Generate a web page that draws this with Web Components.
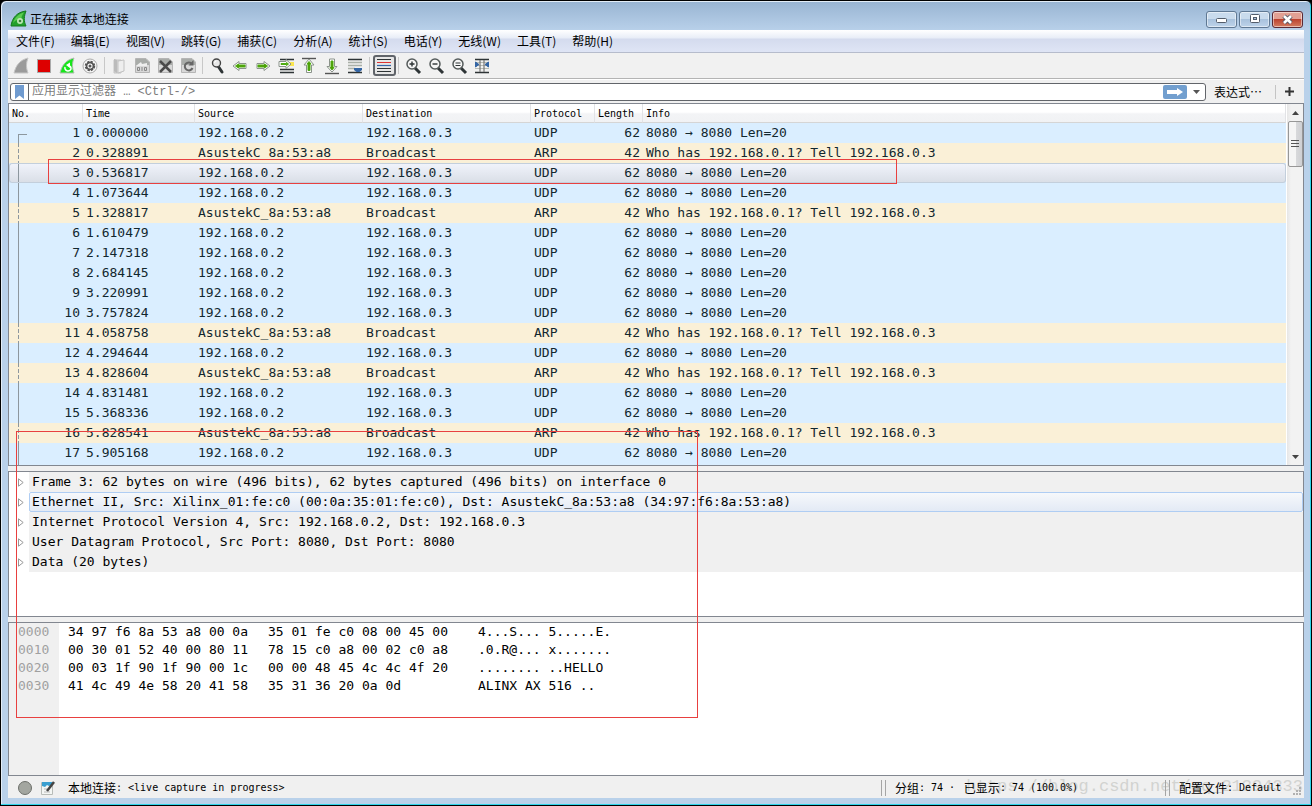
<!DOCTYPE html>
<html lang="zh-CN">
<head>
<meta charset="utf-8">
<title>正在捕获 本地连接</title>
<style>
  html, body { margin: 0; height: 100%; background: #000; }
  body {
    --ui: "Noto Sans CJK SC", sans-serif;
    --mono: "DejaVu Sans Mono", monospace;
    --line: #828790;
    --face: #f0f0f0;
    position: relative;
    overflow: hidden;
    font: 12px/16px var(--ui);
    color: #000;
  }
</style>
</head>
<body>
<app-window>
  <title-bar slot="title">正在捕获 本地连接</title-bar>
  <menu-bar></menu-bar>
  <tool-bar></tool-bar>
  <filter-bar></filter-bar>
  <pane-stack>
    <packet-list></packet-list>
    <packet-details></packet-details>
    <packet-bytes></packet-bytes>
  </pane-stack>
  <status-bar></status-bar>
</app-window>
<region-mark style="left:48px;top:159px;width:849px;height:25px"></region-mark>
<region-mark style="left:16px;top:431px;width:682px;height:287px"></region-mark>

<script>
const define = (name, html, setup) => {
  const t = document.createElement('template');
  t.innerHTML = '<style>:host,*,*::before{box-sizing:border-box}button{font:inherit;color:inherit;border:0;background:none;padding:0;margin:0}</style>' + html;
  customElements.define(name, class extends HTMLElement {
    constructor() {
      super();
      this.attachShadow({ mode: 'open' }).append(t.content.cloneNode(true));
      if (setup) setup(this.shadowRoot, this);
    }
  });
};

define('app-window', `
<style>
:host { display:flex; flex-direction:column; height:100vh; padding:0 7px 7px;
  border:1px solid #000; border-radius:6px 6px 0 0; box-shadow:inset -1px -1px #2fd5ea, inset 1px 1px #e3edf7;
  background:linear-gradient(#98b4d2, #b9d1ea 30px) }
.client { flex:1; min-height:0; display:flex; flex-direction:column; background:var(--face) }
</style>
<slot name="title"></slot><div class="client"><slot></slot></div>`);

define('title-bar', `
<style>
:host { display:flex; align-items:center; height:29px; flex:none; padding:7px 1px 0 2px }
svg { display:block }
.logo { margin-right:3px }
span { flex:1 }
.controls { display:flex; gap:2px }
button { width:31px; height:17px; border:1px solid #5f7893; border-radius:3px; display:grid; place-items:center;
  box-shadow:inset 0 0 0 1px #ffffff80; background:linear-gradient(#c9dbed 50%, #a9c2dd 50%, #bdd3ea) }
.close { border-color:#5b2a35; background:linear-gradient(#e2a093 50%, #bd4430 50%, #d37c60) }
</style>
<svg class="logo" width="17" height="18" viewBox="0 0 17 18"><path d="M1 16C2 8 7 2 16 1C14 6 13.500 11 16 16Z" fill="#23a02c" stroke="#147a1c"/><path d="M3 13C5 7 9 3.500 14 2.500C12 5 11 8 11.500 10C8 9 5 10 3 13Z" fill="#5ccc50"/><circle cx="10" cy="11" r="3" fill="#bde8b4"/><circle cx="10" cy="11" r="1.300" fill="#3f7f3d"/></svg>
<span><slot></slot></span>
<div class="controls">
<button aria-label="最小化"><svg width="13" height="7"><rect x="1.500" y="2.500" width="10" height="4" rx="1" fill="#fff" stroke="#535d6b"/></svg></button>
<button aria-label="最大化"><svg width="12" height="10"><rect x="1.500" y=".5" width="9" height="8" rx="1" fill="#fff" stroke="#535d6b"/><rect x="4.500" y="3.500" width="3" height="2" fill="#a9c2dd" stroke="#535d6b"/></svg></button>
<button class="close" aria-label="关闭"><svg width="13" height="11" viewBox="0 0 13 11"><path d="M3 2L10 9M10 2L3 9" stroke="#535666" stroke-width="4.500"/><path d="M3 2L10 9M10 2L3 9" stroke="#fff" stroke-width="2.600"/></svg></button>
</div>`);

define('menu-bar', `
<style>
:host { display:block; flex:none; height:23px; border-bottom:1px solid #b6bccc; background:linear-gradient(#fff, #e8edf7 8px, #d4dbee 9px, #dfe5f5) }
nav { display:flex; height:22px }
button { padding:0 8px; flex:none; white-space:nowrap }
</style><nav></nav>`, root => {
  const nav = root.querySelector('nav');
  for (const s of ['文件(F)','编辑(E)','视图(V)','跳转(G)','捕获(C)','分析(A)','统计(S)','电话(Y)','无线(W)','工具(T)','帮助(H)']) {
    const b = document.createElement('button');
    b.textContent = s;
    nav.append(b);
  }
});

const page = '<path d="M1.500 1.500H12L15.500 5V15.500H1.500Z" fill="#d8d8d8" stroke="#b5b5b5"/><path d="M2 2H12L15 5V8H2Z" fill="#a9aca9"/>';
const lens = '<path d="M10 11L15 16" stroke="#2e3436" stroke-width="3"/><circle cx="7" cy="7" r="5" fill="#f6f6f6" stroke="#555b5b" stroke-width="1.500"/>';
const green = d => `<path d="${d}" fill="#fff" stroke="#8b938b" stroke-width="1" stroke-linejoin="round"/>`;
const icons = {
  start: '<path d="M1 16C3 8 7 3 15 1C13 6 13 11 15 16Z" fill="#9b9b9b" stroke="#c6c6c6"/>',
  stop: '<rect x="1.500" y="2.500" width="13" height="13" fill="#d00" stroke="#aaa"/>',
  restart: '<path d="M1 16C3 8 7 3 15 1C13 6 13 11 15 16Z" fill="#17e61a" stroke="#b0bdb0"/><path d="M6 10C5 15 12 15 12 11.500C12 10 11 9 9.500 9" fill="none" stroke="#fff" stroke-width="1.500"/><path d="M11 5.500V11L7 8Z" fill="#fff"/>',
  options: '<circle cx="8" cy="9" r="7" fill="#f8f8f8" stroke="#aaa"/><circle cx="8" cy="9" r="4" fill="none" stroke="#555" stroke-width="2.500" stroke-dasharray="2.100 1.042"/><circle cx="8" cy="9" r="3.500" fill="none" stroke="#555" stroke-width="1.500"/><circle cx="8" cy="9" r="1.500" fill="#555"/>',
  open: '<path d="M3 3H10V16H3Z" fill="#d3d3d3" stroke="#c4c4c4"/><path d="M7 4L13 3V14L7 16Z" fill="#eee" stroke="#c2c2c2"/><path d="M3 2L6 3V16L3 14Z" fill="#bbb"/>',
  save: page + '<path d="M3 8L7 5L8 7L13 6V9H3Z" fill="#eee"/><path d="M3.500 10.500H5.500V13.500H3.500ZM8 10V14M10.500 10.500H12.500V13.500H10.500Z" stroke="#888"/>',
  closefile: page + '<path d="M3 4L14 15M14 4L3 15" stroke="#4a4a4a" stroke-width="2.500"/>',
  reload: page + '<path d="M12 7A4 4 0 1 0 12.500 11" fill="none" stroke="#666" stroke-width="2"/><path d="M13.500 3V8.500H8.500Z" fill="#666"/>',
  find: '<path d="M9 9L13 15" stroke="#2e3436" stroke-width="3" stroke-linecap="round"/><circle cx="7.500" cy="6" r="4" fill="#e8e8e8" stroke="#444" stroke-width="1.400"/><path d="M5.500 6Q5.500 4 7.500 4" fill="none" stroke="#fff"/>',
  back: green('M1 9L7 4.500V6.500H14V11.500H7V13.500Z') + '<path d="M3.500 9L6.500 7V8H13V10H6.500V11Z" fill="#4e9a06" stroke="#4eac10"/>',
  next: green('M15 9L9 4.500V6.500H2V11.500H9V13.500Z') + '<path d="M12.500 9L9.500 7V8H3V10H9.500V11Z" fill="#4e9a06" stroke="#4eac10"/>',
  goto: '<path d="M2 2.500H16M2 12.500H16M2 15.500H16" stroke="#2e3436" stroke-width="1.400"/><path d="M11 5H16V9H11Z" fill="#fbe64f"/>' + green('M13 7L8 2.500V4.500H1V9.500H8V11.500Z') + '<path d="M10.500 7L8.500 5.500V6.500H3V7.500H8.500V8.500Z" fill="#4e9a06" stroke="#4eac10"/>',
  first: '<path d="M1 1.500H15" stroke="#555" stroke-width="1.400"/>' + green('M8 2L13 8H10.500V15.500H5.500V8H3Z') + '<path d="M8 4.500L10 7H9V13.500H7V7H6Z" fill="#4e9a06" stroke="#4eac10"/>',
  last: '<path d="M1 16.500H15" stroke="#555" stroke-width="1.400"/>' + green('M8 15L13 9.500H10.500V2H5.500V9.500H3Z') + '<path d="M8 13L10 10.500H9V4H7V10.500H6Z" fill="#4e9a06" stroke="#4eac10"/>',
  scroll: '<path d="M1 2.500H15M1 15.500H15" stroke="#2e3436" stroke-width="1.400"/><path d="M1 5.500H15M1 8.500H15M1 11.500H8" stroke="#aab0a8" stroke-width="1.400"/><path d="M7 11H15V13L12.500 15H9.500L7 13Z" fill="#3465a4"/>',
  color: '<path d="M1 2.500H15M1 11.500H15M1 14.500H15" stroke="#2e3436" stroke-width="1.200"/><path d="M1 5.500H15" stroke="#d33"/><path d="M1 8.500H15" stroke="#36a" stroke-width="1.200"/>',
  zoomin: lens + '<path d="M4.500 7H9.500M7 4.500V9.500" stroke="#2e3436" stroke-width="1.400"/>',
  zoomout: lens + '<path d="M4.500 7H9.500" stroke="#2e3436" stroke-width="1.400"/>',
  normal: lens + '<path d="M4.500 6H9.500M4.500 8.500H9.500" stroke="#2e3436" stroke-width="1.200"/>',
  resize: '<path d="M1 2.500H15M1 15.500H15" stroke="#2e3436" stroke-width="1.400"/><path d="M1 5.500H15M1 8.500H15M1 11.500H15" stroke="#b8bcb4"/><path d="M6 3V15M10 3V15" stroke="#777" stroke-width="1.200"/><path d="M1.500 5L5 7.500L1.500 10ZM14.500 5L11 7.500L14.500 10Z" fill="#3465a4" stroke="#3465a4"/>'
};

define('tool-bar', `
<style>
:host { display:block; flex:none; height:26px; padding:1px 2px; border-bottom:1px solid #b4b4b4; background:#f1f1f1 }
.row { display:flex; align-items:center }
button { width:23px; height:23px; display:grid; place-items:center }
button[aria-pressed] { height:21px; border:2px solid #60646a; border-radius:3px; background:#e6e6e6 }
i { width:6px; height:17px; flex:none; background:linear-gradient(#c8c8c8,#c8c8c8) 2px 0/1px 100% no-repeat }
</style><div class="row" role="toolbar"></div>`, root => {
  const row = root.querySelector('.row');
  const names = 'start stop restart options | open save closefile reload | find back next goto first last scroll | color | zoomin zoomout normal resize';
  row.innerHTML = names.split(' ').map(n => n === '|' ? '<i></i>' :
    `<button aria-label="${n}"${n === 'color' ? ' aria-pressed="true"' : ''}><svg width="17" height="18" viewBox="0 0 17 18" fill="none">${icons[n]}</svg></button>`).join('');
});

define('filter-bar', `
<style>
:host { display:flex; align-items:center; flex:none; height:24px; padding:0 2px; border-top:1px solid #fff }
.box { flex:1; min-width:0; height:18px; display:flex; align-items:center; border:1px solid #62656a; border-radius:3px; background:#fff }
.mark { width:18px; height:16px; border-right:1px solid #62656a; display:grid; place-items:center }
input { flex:1; min-width:0; height:16px; border:0; outline:0; background:none; padding:0 3px; font:12px/16px "Liberation Mono","Noto Sans CJK SC",monospace }
input::placeholder { color:#7c7c7c; opacity:1 }
.go { width:24px; height:14px; background:#729fcf; border-radius:2px; display:grid; place-items:center }
.drop { width:18px; height:16px; display:grid; place-items:center }
.expr { margin-left:8px; width:48px; text-align:left; white-space:nowrap }
i { width:1px; height:14px; margin-left:13px; background:#c4c4c4 }
.add { width:26px; height:20px; display:grid; place-items:center }
</style>
<div class="box">
<button class="mark" aria-label="书签"><svg width="9" height="14"><path d="M0 0H9V14L4.500 10.500L0 14Z" fill="#6f9bd0"/></svg></button>
<input aria-label="显示过滤器" placeholder="应用显示过滤器 … &lt;Ctrl-/&gt;">
<button class="go" aria-label="应用"><svg width="18" height="10"><path d="M1 3H11V1L17 5L11 9V7H1Z" fill="#fff"/></svg></button>
<button class="drop" aria-label="历史"><svg width="7" height="4"><path d="M0 0H7L3.500 4Z" fill="#555"/></svg></button>
</div>
<button class="expr">表达式…</button><i></i>
<button class="add" aria-label="添加"><svg width="9" height="9"><path d="M4.500 0V9M0 4.500H9" stroke="#333" stroke-width="2"/></svg></button>`);

define('pane-stack', `
<style>:host { flex:1; min-height:0; display:grid; grid-template-columns:minmax(0,1fr); grid-template-rows:363fr 146fr 154fr; gap:5px }</style><slot></slot>`);

const A = ['AsustekC_8a:53:a8', 'Broadcast', 'ARP', 42, 'Who has 192.168.0.1? Tell 192.168.0.3'];
const U = ['192.168.0.2', '192.168.0.3', 'UDP', 62, '8080 → 8080 Len=20'];
const packets = [['0.000000',U],['0.328891',A],['0.536817',U],['1.073644',U],['1.328817',A],['1.610479',U],['2.147318',U],['2.684145',U],['3.220991',U],['3.757824',U],['4.058758',A],['4.294644',U],['4.828604',A],['4.831481',U],['5.368336',U],['5.828541',A],['5.905168',U]];

define('packet-list', `
<style>
:host { display:flex; min-height:0; border:1px solid var(--line); background:#daeeff; overflow:hidden }
.view { flex:1; min-width:0; overflow:hidden; border-right:1px solid #fff }
table { width:100%; table-layout:fixed; border-collapse:separate; border-spacing:0 }
th { height:19px; padding:2px 0 0 3px; text-align:left; font:10px/16px var(--mono); border-right:1px solid #e2e3e6; border-bottom:1px solid #d5d5d5;
  background:linear-gradient(#fff 45%, #f3f4f6 55%, #f1f2f4) }
td { height:20px; padding:0 0 0 3px; font:13px/20px var(--mono); white-space:pre; overflow:hidden; color:#12272e }
.n { text-align:right; padding:0 3px 0 0 }
.udp td { background-color:#daeeff }
.arp td { background-color:#faf0d7 }
td:first-child { background-image:linear-gradient(#8d979e,#8d979e); background-size:1px 100%; background-position:9px 0; background-repeat:no-repeat }
.arp td:first-child { background-image:repeating-linear-gradient(#8d979e 0 4px, transparent 4px 6px) }
.udp.first td:first-child { background-image:linear-gradient(#8d979e,#8d979e),linear-gradient(#8d979e,#8d979e); background-size:1px 9px,9px 1px; background-position:9px 11px,9px 11px }
.sel td { background:linear-gradient(#f0f3fb,#dadfe7); border:solid #c3cfdc; border-width:1px 0; line-height:18px }
.sel td:first-child { background:linear-gradient(#8d979e,#8d979e) 8px 0/1px 100% no-repeat, linear-gradient(#f0f3fb,#dadfe7); border-left-width:1px; border-radius:3px 0 0 3px }
.sel td:last-child { border-right-width:1px; border-radius:0 3px 3px 0 }
.bar { width:16px; display:flex; flex-direction:column; align-items:center; background:linear-gradient(90deg,#e6e6e6,#f2f2f2 4px) }
.bar button { width:16px; height:17px; display:grid; place-items:center }
.thumb { width:15px; height:46px; border:1px solid #979797; border-radius:2px; display:grid; place-items:center; background:linear-gradient(90deg,#f5f5f5 50%,#d9dadc 50%,#cfd0d3) }
.gap { flex:1 }
</style>
<div class="view"><table>
<colgroup><col style="width:74px"><col style="width:112px"><col style="width:168px"><col style="width:168px"><col style="width:64px"><col style="width:48px"><col></colgroup>
<thead><tr><th>No.</th><th>Time</th><th>Source</th><th>Destination</th><th>Protocol</th><th>Length</th><th>Info</th></tr></thead><tbody></tbody></table></div>
<div class="bar"><button aria-label="向上"><svg width="7" height="4"><path d="M0 4L3.500 0L7 4Z" fill="#444"/></svg></button>
<div class="thumb"><svg width="8" height="8"><path d="M0 .5H8M0 3.500H8M0 6.500H8" stroke="#555"/></svg></div><div class="gap"></div>
<button aria-label="向下"><svg width="7" height="4"><path d="M0 0H7L3.500 4Z" fill="#444"/></svg></button></div>`, root => {
  const more = '<tr class="udp"><td></td><td></td><td></td><td></td><td></td><td></td><td></td></tr>';
  root.querySelector('tbody').innerHTML = packets.map(([time, p], i) =>
    `<tr class="${p[2].toLowerCase()}${i === 0 ? ' first' : ''}${i === 2 ? ' sel' : ''}"><td class="n">${i + 1}</td><td>${time}</td><td>${p[0]}</td><td>${p[1]}</td><td>${p[2]}</td><td class="n">${p[3]}</td><td>${p[4]}</td></tr>`).join('') + more;
});

define('packet-details', `
<style>
:host { display:block; min-height:0; border:1px solid var(--line); background:#fff; overflow:hidden }
ul { margin:0; padding:0; list-style:none }
li { display:flex; align-items:center; height:20px; font:13px/20px var(--mono) }
button { width:20px; height:20px; flex:none; padding:0 0 0 4px; display:grid; place-items:center }
span { flex:1; height:20px; padding-left:3px; background:var(--face); white-space:pre; overflow:hidden }
.sel span { border:1px solid #afcdf3; border-radius:2px; padding-left:2px; line-height:18px; background:linear-gradient(#f6f8fb,#e3eaf5) }
</style><ul></ul>`, root => {
  root.querySelector('ul').innerHTML = [
    'Frame 3: 62 bytes on wire (496 bits), 62 bytes captured (496 bits) on interface 0',
    'Ethernet II, Src: Xilinx_01:fe:c0 (00:0a:35:01:fe:c0), Dst: AsustekC_8a:53:a8 (34:97:f6:8a:53:a8)',
    'Internet Protocol Version 4, Src: 192.168.0.2, Dst: 192.168.0.3',
    'User Datagram Protocol, Src Port: 8080, Dst Port: 8080',
    'Data (20 bytes)'
  ].map((s, i) => `<li${i === 1 ? ' class="sel"' : ''}><button aria-label="展开"><svg width="6" height="9"><path d="M.5 .8L5.200 4.500L.5 8.200Z" fill="#fff" stroke="#999"/></svg></button><span>${s}</span></li>`).join('');
});

define('packet-bytes', `
<style>
:host { display:block; min-height:0; border:1px solid var(--line); background:linear-gradient(90deg,var(--face) 50px,#fff 50px); overflow:hidden }
table { border-collapse:collapse; table-layout:fixed; width:640px }
td { height:18px; padding:0; font:13px/18px var(--mono); white-space:pre }
td:first-child { color:#a0a0a0; padding-left:9px }
</style><table><colgroup><col style="width:59px"><col style="width:200px"><col style="width:210px"><col></colgroup><tbody></tbody></table>`, root => {
  root.querySelector('tbody').innerHTML = [
    ['0000','34 97 f6 8a 53 a8 00 0a','35 01 fe c0 08 00 45 00','4...S... 5.....E.'],
    ['0010','00 30 01 52 40 00 80 11','78 15 c0 a8 00 02 c0 a8','.0.R@... x.......'],
    ['0020','00 03 1f 90 1f 90 00 1c','00 00 48 45 4c 4c 4f 20','........ ..HELLO '],
    ['0030','41 4c 49 4e 58 20 41 58','35 31 36 20 0a 0d','ALINX AX 516 ..']
  ].map(r => '<tr>' + r.map(c => `<td>${c}</td>`).join('') + '</tr>').join('');
});

define('status-bar', `
<style>
:host { display:flex; align-items:center; flex:none; height:22px; padding-top:2px; position:relative; background:var(--face) }
.main { flex:1; display:flex; align-items:center; padding-left:9px; min-width:0 }
.main button { width:24px; height:20px; display:grid; justify-items:start; align-items:center }
.main p { margin-left:3px }
p { margin:0; display:flex; white-space:pre; z-index:1 }
b { font:10px/16px var(--mono) }
section { display:flex; align-items:center; z-index:1 }
section::before { content:""; width:5px; height:16px; border:solid #a5a5a5; border-width:0 1px; margin-right:9px }
.count { width:284px } .profile { width:139px }
.water { position:absolute; right:1px; top:0; font:17px/22px "Liberation Mono",monospace; color:#d2d3d0; white-space:nowrap }
.grip { position:absolute; right:2px; bottom:2px }
</style>
<span class="water">https://blog.csdn.net/qq_21394333</span>
<div class="main"><button aria-label="专家信息"><svg width="16" height="16"><circle cx="8" cy="8" r="6.500" fill="#a3a6a0" stroke="#6d706b"/></svg></button>
<button aria-label="注释"><svg width="15" height="16"><path d="M.5 2.500H11.500V14.500H.5Z" fill="#f4f6f4" stroke="#b8bcb8"/><path d="M1 2H11V5L8 6L6 5L4 7L1 6Z" fill="#3a9fd0"/><path d="M3 9H6M3 12H9" stroke="#bbb"/><path d="M13 2L6 11" stroke="#444" stroke-width="2.500"/></svg></button>
<p>本地连接<b>: &lt;live capture in progress&gt;</b></p></div>
<section class="count"><p>分组<b>: 74 · </b> 已显示<b>: 74 (100.0%)</b></p></section>
<section class="profile"><p>配置文件<b>: Default</b></p></section>
<svg class="grip" width="9" height="9" fill="#b0b0b0"><path d="M6 0H8V2H6ZM3 3H5V5H3ZM6 3H8V5H6ZM0 6H2V8H0ZM3 6H5V8H3ZM6 6H8V8H6Z"/></svg>`);

define('region-mark', `
<style>:host { position:absolute; border:1px solid #e8403f; pointer-events:none; z-index:5 }</style>`);
</script>
</body>
</html>
